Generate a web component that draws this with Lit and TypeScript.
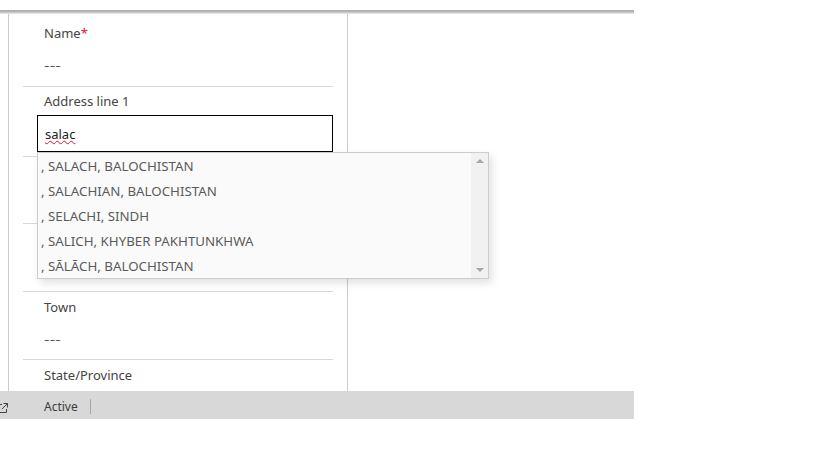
import { LitElement, html, css } from "lit";
import { customElement } from "lit/decorators.js";

const ITEMS = [", SALACH, BALOCHISTAN", ", SALACHIAN, BALOCHISTAN", ", SELACHI, SINDH", ", SALICH, KHYBER PAKHTUNKHWA", ", SĀLĀCH, BALOCHISTAN"];

@customElement("app-root")
export class AppRoot extends LitElement {
  static styles = css`
    :host { display: block; width: 819px; height: 460px; background: #fff; font-family: "Noto Sans", "Open Sans", sans-serif; font-size: 13px; color: #444; overflow: hidden; }
    .app { position: relative; width: 634px; height: 419px; display: flex; flex-direction: column; }
    .top { height: 10px; flex: none; }
    .rule { height: 4px; flex: none; background: linear-gradient(#aaa, #bbb 50%, #f0f0f0); }
    .body { flex: 1; min-height: 0; display: flex; overflow: hidden; }
    .rail { width: 8px; flex: none; border-right: 1px solid #ccc; }
    .form { width: 339px; flex: none; box-sizing: border-box; border-right: 1px solid #ccc; padding: 0 14px; margin-top: -1px; background: linear-gradient(#fbfbfb, #fff 4px); }
    .row { height: 68px; box-sizing: border-box; border-bottom: 1px solid #d8d8d8; padding: 4px 0 0 21px; }
    .row:last-child { border-bottom: 0; }
    .row.first { height: 74px; padding-top: 9px; }
    .row.address { height: 70px; padding-top: 3px; }
    .row.short { height: 67px; }
    .label { line-height: 23px; height: 23px; }
    .req { color: #e81123; }
    .value { margin-top: 10px; line-height: 20px; height: 20px; letter-spacing: 0.2px; font-size: 17px; font-weight: 300; }
    .input { margin: 2px 0 0 -7px; height: 37px; box-sizing: border-box; border: 1px solid #000; padding: 1px 0 0 7px; line-height: 35px; color: #222; }
    .squiggle { text-decoration: underline wavy #e81123 1px; text-underline-offset: 1px; }
    .footer { height: 28px; flex: none; box-sizing: border-box; background: #d8d8d8; display: flex; align-items: center; padding: 2px 0 0 44px; position: relative; }
    .footer svg { position: absolute; left: -3px; top: 11px; }
    .status { padding-right: 12px; border-right: 1px solid #a8a8a8; line-height: 15px; font-size: 12px; color: #3c3c3c; }
    .drop { position: absolute; left: 37px; top: 152px; width: 452px; height: 127px; box-sizing: border-box; border: 1px solid #ccc; background: #fafafa; box-shadow: 3px 4px 8px rgba(0,0,0,0.12); display: flex; }
    .list { flex: 1; padding-top: 1px; }
    .item { height: 25px; line-height: 25px; padding-left: 3px; white-space: nowrap; color: #5a5a5a; font-size: 13.3px; }
    .bar { width: 17px; flex: none; background: #f1f1f1; display: flex; flex-direction: column; justify-content: space-between; align-items: center; padding: 6px 0; box-sizing: border-box; }
    .up { width: 0; height: 0; border: 4px solid transparent; border-top: 0; border-bottom: 4px solid #a6a6a6; }
    .down { width: 0; height: 0; border: 4px solid transparent; border-bottom: 0; border-top: 4px solid #a6a6a6; }
  `;

  render() {
    return html`
      <div class="app">
        <div class="top"></div>
        <div class="rule"></div>
        <div class="body">
          <div class="rail"></div>
          <div class="form">
            <div class="row first"><div class="label">Name<span class="req">*</span></div><div class="value">---</div></div>
            <div class="row address"><div class="label">Address line 1</div><div class="input"><span class="squiggle">salac</span></div></div>
            <div class="row short"></div>
            <div class="row"></div>
            <div class="row"><div class="label">Town</div><div class="value">---</div></div>
            <div class="row"><div class="label">State/Province</div></div>
          </div>
        </div>
        <div class="footer">
          <svg width="12" height="12" viewBox="0 0 12 12" fill="none" stroke="#444" stroke-width="1">
            <path d="M5 2.5H1.5v8h8V7M6.5 1.5h4v4M10.5 1.5L5 7"/>
          </svg>
          <span class="status">Active</span>
        </div>
        <div class="drop">
          <div class="list">${ITEMS.map((i) => html`<div class="item">${i}</div>`)}</div>
          <div class="bar"><div class="up"></div><div class="down"></div></div>
        </div>
      </div>
    `;
  }
}
